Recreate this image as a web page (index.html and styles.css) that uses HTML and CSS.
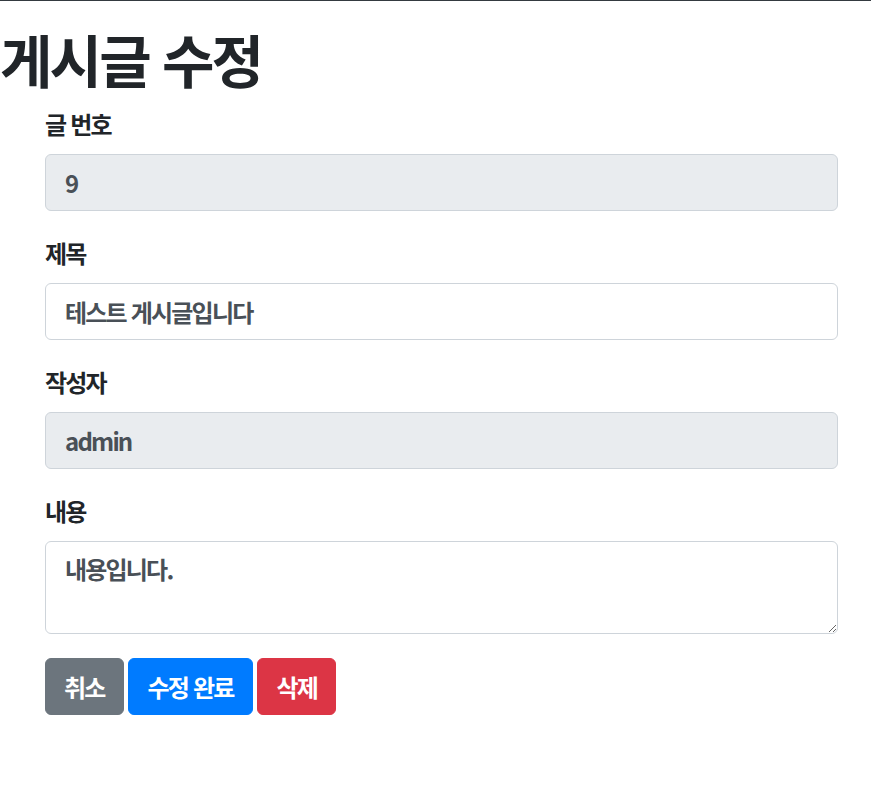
FILE: index.html
```html
<!doctype html>
<html lang="ko">

<head>
	<meta charset="utf-8">
	<title>게시글 수정</title>
	<link rel="stylesheet" href="styles.css">
</head>

<body>
	<div class='top-line'></div>
	<h1 class='page-title'>게시글 수정</h1>
	<form class='edit-form'>
		<div class='form-group'>
			<label for='post-no'>글 번호</label>
			<input id='post-no' class='form-control' value='9' readonly>
		</div>
		<div class='form-group'>
			<label for='post-title'>제목</label>
			<input id='post-title' class='form-control' value='테스트 게시글입니다'>
		</div>
		<div class='form-group'>
			<label for='post-writer'>작성자</label>
			<input id='post-writer' class='form-control' value='admin' readonly>
		</div>
		<div class='form-group'>
			<label for='post-content'>내용</label>
			<textarea id='post-content' class='form-control' rows='2'>내용입니다.</textarea>
		</div>
		<div class='form-buttons'>
			<button type='button' class='btn btn-secondary'>취소</button>
			<button type='submit' class='btn btn-primary'>수정 완료</button>
			<button type='button' class='btn btn-danger'>삭제</button>
		</div>
	</form>
</body>

</html>
```

FILE: styles.css
```css
html, body {
	margin: 0;
	padding: 0;
}
body {
	font-family: 'Noto Sans CJK KR', 'Noto Sans', sans-serif;
	font-size: 24px;
	line-height: 1.5;
	letter-spacing: -0.075em;
	color: #212529;
	background-color: #fff;
}
.top-line {
	height: 1px;
	background-color: #343a40;
}
.page-title {
	margin: 23px 0 14px 0;
	font-size: 57px;
	font-weight: 700;
	line-height: 1.2;
	letter-spacing: -0.05em;
}
.edit-form {
	margin: 0 33px 0 45px;
}
.form-group {
	margin-bottom: 24px;
}
.form-group label {
	display: inline-block;
	margin-bottom: 12px;
	font-weight: 700;
}
.form-control {
	display: block;
	box-sizing: border-box;
	width: 100%;
	height: 57px;
	margin: 0;
	padding: 9px 19px;
	font-family: inherit;
	font-size: 24px;
	font-weight: 700;
	line-height: 1.5;
	letter-spacing: inherit;
	color: #495057;
	background-color: #fff;
	border: 1px solid #ced4da;
	border-radius: 6px;
	outline: none;
}
.form-control[readonly] {
	background-color: #e9ecef;
}
textarea.form-control {
	height: 93px;
	resize: vertical;
}
.btn {
	display: inline-block;
	height: 57px;
	padding: 9px 18px;
	font-family: inherit;
	font-size: 24px;
	font-weight: 700;
	line-height: 1.5;
	letter-spacing: inherit;
	color: #fff;
	border: 1px solid transparent;
	border-radius: 6px;
	cursor: pointer;
	vertical-align: middle;
}
.btn-secondary {
	background-color: #6c757d;
	border-color: #6c757d;
}
.btn-primary {
	background-color: #007bff;
	border-color: #007bff;
}
.btn-danger {
	background-color: #dc3545;
	border-color: #dc3545;
}
```
